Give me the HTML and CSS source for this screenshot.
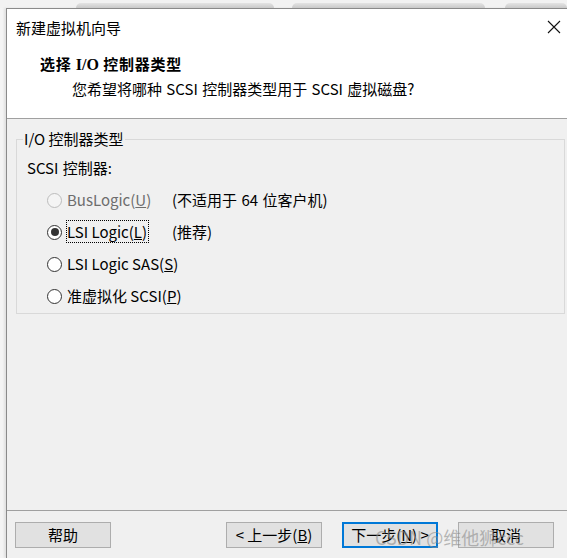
FILE: index.html
```html
<!DOCTYPE html>
<html lang="zh-CN">
<head>
<meta charset="utf-8">
<title>新建虚拟机向导</title>
<link rel="stylesheet" href="styles.css">
</head>
<body>
<div class="strip">
  <span class="tab tab1"></span>
  <span class="tab tab2"></span>
  <span class="tab tab3"></span>
</div>
<div class="dialog">
  <div class="top">
    <div class="titlebar">
      <span class="title">新建虚拟机向导</span>
      <svg class="close" width="14" height="14" viewBox="0 0 14 14"><path d="M1 1 L13 13 M13 1 L1 13" stroke="#111" stroke-width="1.1" fill="none"/></svg>
    </div>
    <div class="header">
      <div class="h-title">选择 <span class="serif">I/O</span> 控制器类型</div>
      <div class="h-sub">您希望将哪种 SCSI 控制器类型用于 SCSI 虚拟磁盘?</div>
    </div>
  </div>
  <div class="body">
    <fieldset class="group">
      <legend>I/O 控制器类型</legend>
      <div class="label">SCSI 控制器:</div>
      <div class="row disabled">
        <span class="radio"></span>
        <span class="opt">BusLogic(<u>U</u>)</span>
        <span class="note">(不适用于 64 位客户机)</span>
      </div>
      <div class="row">
        <span class="radio checked"></span>
        <span class="opt"><span class="focus">LSI Logic(<u>L</u>)</span></span>
        <span class="note">(推荐)</span>
      </div>
      <div class="row">
        <span class="radio"></span>
        <span class="opt wide">LSI Logic SAS(<u>S</u>)</span>
      </div>
      <div class="row">
        <span class="radio"></span>
        <span class="opt wide">准虚拟化 SCSI(<u>P</u>)</span>
      </div>
    </fieldset>
  </div>
  <div class="footer">
    <button class="btn">帮助</button>
    <span class="spacer"></span>
    <button class="btn">&lt; 上一步(<u>B</u>)</button>
    <button class="btn default">下一步(<u>N</u>) &gt;</button>
    <button class="btn">取消</button>
    <span class="watermark">CSDN @维他狮ccc</span>
  </div>
</div>
</body>
</html>
```

FILE: styles.css
```css
html, body {
  margin: 0;
  padding: 0;
  height: 100%;
  overflow: hidden;
}
body {
  background: #f4f4f4;
  font-family: "Noto Sans CJK SC", "Noto Sans", sans-serif;
  font-size: 15px;
  color: #000;
}
.strip {
  height: 8px;
  display: flex;
  align-items: flex-end;
  background: #f2f2f2;
}
.tab {
  height: 5px;
  border-radius: 5px 5px 0 0;
  background: linear-gradient(#e4e4e4, #c9c9c9);
}
.tab1 { margin-left: 76px; width: 198px; }
.tab2 { margin-left: 18px; width: 193px; }
.tab3 { margin-left: 20px; flex: 1; }
.dialog {
  margin-left: 6px;
  height: calc(100% - 8px);
  border-left: 1px solid #8a8a8a;
  border-top: 1px solid #8a8a8a;
  box-shadow: -2px 0 2px rgba(0,0,0,0.08);
  background: #f0f0f0;
  display: flex;
  flex-direction: column;
  box-sizing: border-box;
}
.top {
  background: #fff;
  border-bottom: 1px solid #a0a0a0;
}
.titlebar {
  height: 38px;
  display: flex;
  align-items: center;
  padding-left: 9px;
}
.title {
  line-height: 20px;
  flex: 1;
}
.close {
  margin-right: 6px;
  margin-top: -2px;
}
.header {
  padding: 7px 0 19px 33px;
}
.h-title {
  font-weight: bold;
  line-height: 20px;
  letter-spacing: 0.8px;
}
.serif {
  font-family: "Liberation Serif", serif;
  font-size: 16px;
  letter-spacing: 0;
}
.h-sub {
  margin-top: 4px;
  padding-left: 32px;
  line-height: 20px;
  word-spacing: 1px;
}
.body {
  flex: 1;
  border-bottom: 1px solid #a0a0a0;
}
.group {
  margin: 10px 2px 0 9px;
  padding: 0;
  border: 1px solid #d9d9d9;
  min-width: 0;
}
.group legend {
  margin-left: 6px;
  padding: 0 1px;
  line-height: 20px;
}
.label {
  margin-top: 9px;
  padding-left: 10px;
  line-height: 20px;
  word-spacing: 1px;
}
.row {
  height: 32px;
  display: flex;
  align-items: center;
  padding-left: 30px;
}
.label + .row { margin-top: 6px; }
.row:last-child { margin-bottom: 1px; }
.radio {
  width: 15px;
  height: 15px;
  box-sizing: border-box;
  border: 1px solid #333;
  border-radius: 50%;
  background: #fff;
  display: flex;
  align-items: center;
  justify-content: center;
  flex: none;
}
.radio.checked::after {
  content: "";
  width: 8px;
  height: 8px;
  border-radius: 50%;
  background: #333;
}
.disabled .radio {
  border-color: #bcbcbc;
  background: #f4f4f4;
}
.disabled .opt { color: #6d6d6d; }
.opt {
  margin-left: 5px;
  width: 105px;
  line-height: 20px;
  white-space: nowrap;
}
.opt.wide { width: auto; }
.focus {
  outline: 1px dotted #000;
  outline-offset: 0;
  padding-right: 1px;
}
.note {
  line-height: 20px;
  word-spacing: 1px;
}
.footer {
  height: 47px;
  box-sizing: border-box;
  display: flex;
  align-items: flex-start;
  padding: 11px 13px 0 8px;
  position: relative;
  flex: none;
}
.spacer { flex: 1; }
.btn {
  width: 96px;
  height: 26px;
  margin-left: 20px;
  padding: 0;
  font: inherit;
  line-height: 20px;
  color: #000;
  background: #e1e1e1;
  border: 1px solid #adadad;
  box-sizing: border-box;
}
.btn:first-child { margin-left: 0; }
.spacer + .btn { margin-left: 0; }
.btn.default {
  border: 2px solid #0078d7;
}
.watermark {
  position: absolute;
  left: 368px;
  top: 14px;
  font-family: "Noto Sans CJK SC", sans-serif;
  font-size: 18px;
  line-height: 24px;
  color: rgba(140,140,140,0.6);
  pointer-events: none;
  white-space: nowrap;
}
```
